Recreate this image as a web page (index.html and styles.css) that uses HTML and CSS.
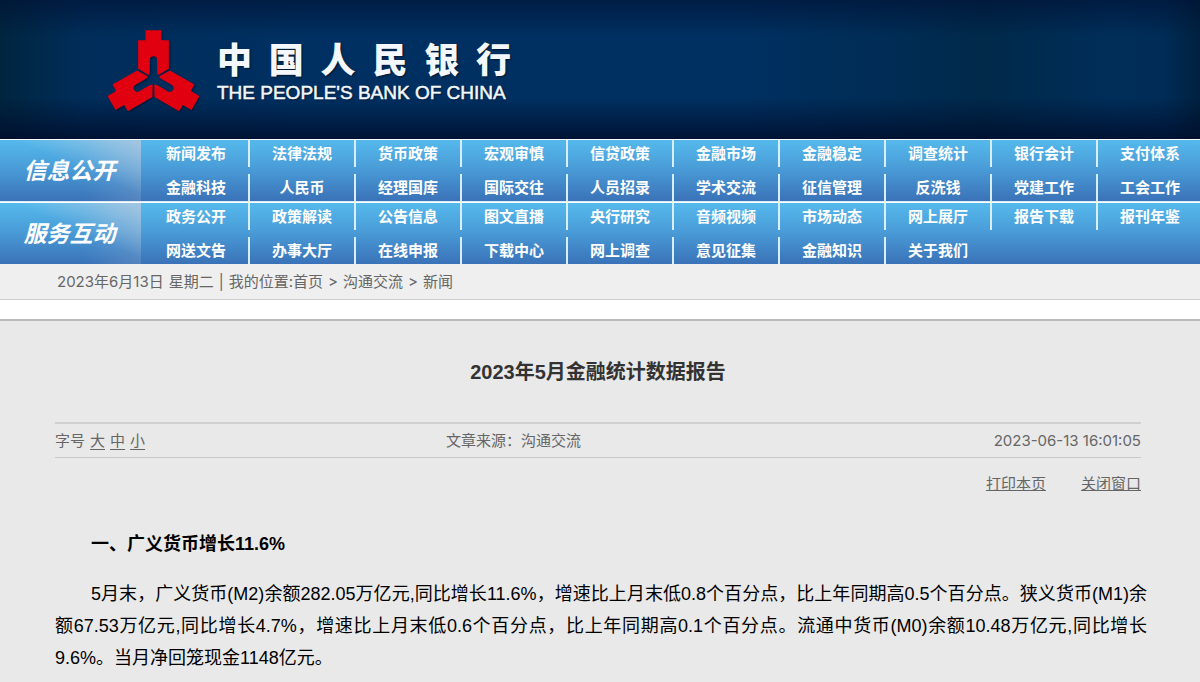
FILE: index.html
```html
<!DOCTYPE html>
<html lang="zh-CN">
  <head>
    <meta charset="UTF-8" />
    <meta name="viewport" content="width=device-width, initial-scale=1.0" />
    <title>2023年5月金融统计数据报告</title>
    <link rel="stylesheet" href="styles.css">
  </head>
  <body>
    <header class="banner">
      <svg class="emblem" viewBox="-136 -148 272 244" aria-hidden="true">
        <defs>
          <path id="lobe" d="M-24-145H24V-115H46V-30L16-12Q11-10 11-20V-54Q11-67 0-67T-11-54V-20Q-11-10-16-12L-46-30V-115H-24Z" />
        </defs>
        <use href="#lobe" />
        <use href="#lobe" transform="rotate(120)" />
        <use href="#lobe" transform="rotate(240)" />
      </svg>
      <div class="bank-name">
        <div class="name-cn"><span>中</span><span>国</span><span>人</span><span>民</span><span>银</span><span>行</span></div>
        <p class="name-en">THE PEOPLE'S BANK OF CHINA</p>
      </div>
    </header>

    <nav class="menu">
      <div class="menu-row">
        <h2>信息公开</h2>
        <ul>
          <li><a href="#">新闻发布</a></li>
          <li><a href="#">法律法规</a></li>
          <li><a href="#">货币政策</a></li>
          <li><a href="#">宏观审慎</a></li>
          <li><a href="#">信贷政策</a></li>
          <li><a href="#">金融市场</a></li>
          <li><a href="#">金融稳定</a></li>
          <li><a href="#">调查统计</a></li>
          <li><a href="#">银行会计</a></li>
          <li><a href="#">支付体系</a></li>
          <li><a href="#">金融科技</a></li>
          <li><a href="#">人民币</a></li>
          <li><a href="#">经理国库</a></li>
          <li><a href="#">国际交往</a></li>
          <li><a href="#">人员招录</a></li>
          <li><a href="#">学术交流</a></li>
          <li><a href="#">征信管理</a></li>
          <li><a href="#">反洗钱</a></li>
          <li><a href="#">党建工作</a></li>
          <li><a href="#">工会工作</a></li>
        </ul>
      </div>
      <div class="menu-row">
        <h2>服务互动</h2>
        <ul>
          <li><a href="#">政务公开</a></li>
          <li><a href="#">政策解读</a></li>
          <li><a href="#">公告信息</a></li>
          <li><a href="#">图文直播</a></li>
          <li><a href="#">央行研究</a></li>
          <li><a href="#">音频视频</a></li>
          <li><a href="#">市场动态</a></li>
          <li><a href="#">网上展厅</a></li>
          <li><a href="#">报告下载</a></li>
          <li><a href="#">报刊年鉴</a></li>
          <li><a href="#">网送文告</a></li>
          <li><a href="#">办事大厅</a></li>
          <li><a href="#">在线申报</a></li>
          <li><a href="#">下载中心</a></li>
          <li><a href="#">网上调查</a></li>
          <li><a href="#">意见征集</a></li>
          <li><a href="#">金融知识</a></li>
          <li><a href="#">关于我们</a></li>
        </ul>
      </div>
    </nav>

    <div class="location">
      <span>2023年6月13日</span>
      <span>星期二</span>
      <span>|</span>
      <span>我的位置:<a href="#">首页</a></span>
      <span>&gt;</span>
      <a href="#">沟通交流</a>
      <span>&gt;</span>
      <a href="#">新闻</a>
    </div>

    <main class="article">
      <h1>2023年5月金融统计数据报告</h1>
      <div class="meta">
        <div class="font-size">字号 <a href="#">大</a> <a href="#">中</a> <a href="#">小</a></div>
        <div>文章来源：沟通交流</div>
        <time datetime="2023-06-13T16:01:05">2023-06-13 16:01:05</time>
      </div>
      <div class="tools">
        <a href="#">打印本页</a>
        <a href="#">关闭窗口</a>
      </div>
      <div class="content">
        <h3>一、广义货币增长11.6%</h3>
        <p>5月末，广义货币(M2)余额282.05万亿元,同比增长11.6%，增速比上月末低0.8个百分点，比上年同期高0.5个百分点。狭义货币(M1)余额67.53万亿元,同比增长4.7%，增速比上月末低0.6个百分点，比上年同期高0.1个百分点。流通中货币(M0)余额10.48万亿元,同比增长9.6%。当月净回笼现金1148亿元。</p>
      </div>
    </main>
  </body>
</html>
```
FILE: styles.css
```css
* {
  margin: 0;
  padding: 0;
  box-sizing: border-box;
}

body {
  background: #fff;
  font-family: Inter, "Noto Sans CJK SC", sans-serif;
  font-size: 15px;
  color: #666;
}

a {
  color: inherit;
}

/* banner */
.banner {
  display: flex;
  align-items: flex-start;
  gap: 18px;
  height: 139px;
  padding: 29px 0 0 108px;
  background:
    linear-gradient(to bottom, rgba(0, 16, 50, 0.6), transparent 26%, transparent 70%, rgba(0, 12, 42, 0.8)),
    linear-gradient(to right, #00253f, #002d5a 7%, #003061 25%, #003061 62%, #002c54 75%, #00294a 82%, #002e5a 93%, #002c56 97%, #00213f);
}

.emblem {
  width: 91px;
  height: 82px;
  fill: #e00010;
  filter: drop-shadow(1px 1px 1px rgba(0, 10, 30, 0.6));
}

.bank-name {
  width: 294px;
  padding-top: 7px;
  color: #f4f8fc;
  text-shadow: 1px 1px 2px #001632;
}

.name-cn {
  display: flex;
  justify-content: space-between;
  font-family: "Noto Sans CJK SC", sans-serif;
  font-size: 35px;
  font-weight: 900;
  line-height: 44px;
}

.name-en {
  font-family: "Liberation Sans", sans-serif;
  font-size: 19px;
  line-height: 26px;
  white-space: nowrap;
  -webkit-text-stroke: 0.5px #f4f8fc;
}

/* menu */
.menu {
  overflow: hidden;
  color: #fff;
}

.menu-row {
  display: flex;
  border-top: 1px solid #fff;
  border-bottom: 1px solid #dcebf8;
  background: linear-gradient(to bottom, #55b9ec, #4a9dd8 45%, #3a72b8);
}

.menu-row + .menu-row {
  border-bottom: none;
}

.menu-row h2 {
  flex: 0 0 141px;
  padding-right: 2px;
  font-family: "Noto Sans CJK SC", sans-serif;
  font-size: 23px;
  font-style: italic;
  line-height: 59px;
  text-align: center;
  background: linear-gradient(to top right, transparent 55%, rgba(205, 205, 220, 0.6)), linear-gradient(to right, transparent 60%, rgba(190, 200, 220, 0.2));
}

.menu-row ul {
  flex: 1;
  display: grid;
  grid-template-columns: repeat(10, minmax(106px, 1fr));
  grid-auto-rows: 27px;
  row-gap: 7px;
  padding-left: 3px;
  list-style: none;
}

.menu-row li {
  border-right: 2px solid #d8eefb;
  font-family: "Noto Sans CJK SC", sans-serif;
  font-weight: bold;
  line-height: 25px;
  text-align: center;
}

.menu-row li:nth-child(10n),
.menu-row li:last-child {
  border-right-color: transparent;
}

.menu-row a {
  text-decoration: none;
}

/* current location */
.location {
  display: flex;
  gap: 5px;
  padding: 0 57px;
  line-height: 35px;
  background: #efefef;
  border-bottom: 1px solid #ccc;
}

.location a {
  text-decoration: none;
}

/* article */
.article {
  min-height: calc(100vh - 319px);
  margin-top: 19px;
  padding: 33px 59px 0 55px;
  border-top: 2px solid #bbb;
  background: #e9e9e9;
}

.article h1 {
  font-family: "Liberation Sans", "Noto Sans CJK SC", sans-serif;
  font-size: 20px;
  line-height: 36px;
  text-align: center;
  color: #333;
}

.meta {
  display: grid;
  grid-template-columns: 36% 1fr auto;
  margin-top: 32px;
  line-height: 33px;
  border-top: 2px solid #d0d0d0;
  border-bottom: 1px solid #c8c8c8;
}

.font-size {
  display: flex;
  gap: 5px;
}

.font-size a {
  text-underline-offset: 3px;
}

.tools {
  display: flex;
  justify-content: flex-end;
  gap: 35px;
  margin-top: 14px;
  line-height: 24px;
}

.content {
  margin: 32px -6px 0 0;
  font-family: "Liberation Sans", "Noto Sans CJK SC", sans-serif;
  font-size: 18px;
  line-height: 32px;
  color: #000;
}

.content h3 {
  margin-bottom: 18px;
  font-size: 18px;
  text-indent: 2em;
}

.content p {
  text-indent: 2em;
  text-align: justify;
}
```
